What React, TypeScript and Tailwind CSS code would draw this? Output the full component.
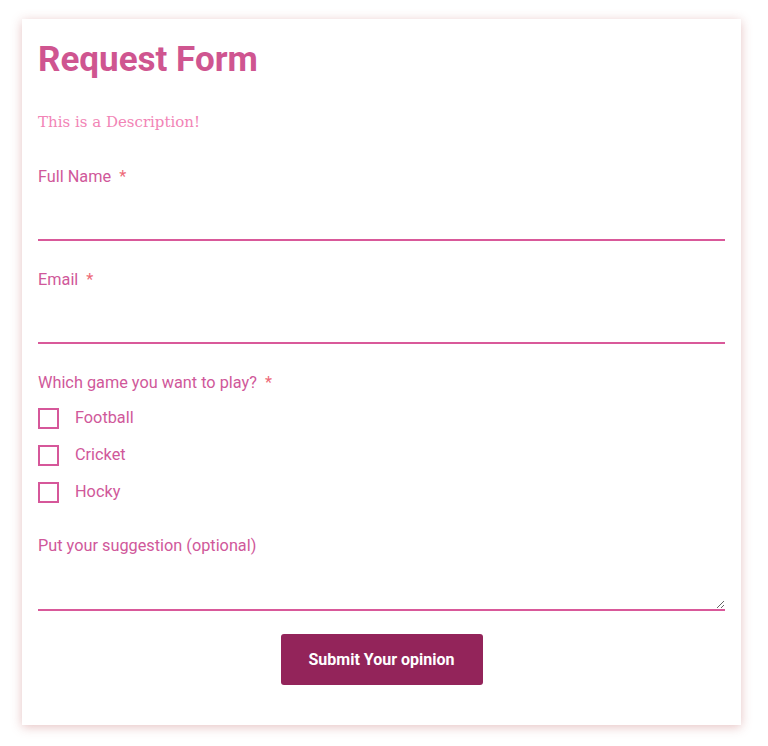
import { useState } from 'react'

const games = ['Football', 'Cricket', 'Hocky']

function Label({ text, required }: { text: string; required?: boolean }) {
  return (
    <label className="block h-6 text-[16.3px] leading-6 text-[#d0589a]">
      {text}
      {required && <span className="ml-2 text-[#ee6a78]">*</span>}
    </label>
  )
}

export default function App() {
  const [checked, setChecked] = useState<string[]>([])

  const toggle = (g: string) =>
    setChecked(c => (c.includes(g) ? c.filter(x => x !== g) : [...c, g]))

  return (
    <div className="min-h-[746px] bg-white pt-[19px] pl-[22px]" style={{ fontFamily: 'Roboto, "Noto Sans", sans-serif' }}>
      <form
        onSubmit={e => e.preventDefault()}
        className="w-[719px] bg-white px-4 pt-[19px] pb-[40px] shadow-[0_2px_10px_rgba(200,120,120,0.45)]"
      >
        <h1 className="h-[43px] text-[35px] leading-[43px] font-bold text-[#cf5590]">Request Form</h1>
        <p
          className="mt-[29px] h-6 text-[15px] leading-6 text-[#f284b6]"
          style={{ fontFamily: '"DejaVu Serif", serif' }}
        >
          This is a Description!
        </p>

        <div className="mt-[31px]">
          <Label text="Full Name" required />
          <input className="block h-[52px] w-full border-b-2 border-[#d9599a] outline-none" />
        </div>

        <div className="mt-[27px]">
          <Label text="Email" required />
          <input className="block h-[52px] w-full border-b-2 border-[#d9599a] outline-none" />
        </div>

        <div className="mt-[27px]">
          <Label text="Which game you want to play?" required />
          <div className="mt-[5px]">
            {games.map(g => (
              <label key={g} className="flex h-[37px] cursor-pointer items-center gap-4">
                <span
                  className={`flex h-[21px] w-[21px] items-center justify-center border-2 border-[#d6579a] ${checked.includes(g) ? 'bg-[#d6579a]' : ''}`}
                >
                  <input type="checkbox" className="hidden" checked={checked.includes(g)} onChange={() => toggle(g)} />
                </span>
                <span className="text-[16.3px] text-[#d0589a]">{g}</span>
              </label>
            ))}
          </div>
        </div>

        <div className="mt-[23px]">
          <Label text="Put your suggestion (optional)" />
          <textarea className="block h-[53px] w-full resize-y border-b-2 border-[#d9599a] outline-none" />
        </div>

        <div className="mt-[23px] flex justify-center">
          <button
            type="submit"
            className="h-[51px] w-[202px] rounded-[3px] bg-[#93245a] text-[16px] font-bold text-white"
          >
            Submit Your opinion
          </button>
        </div>
      </form>
    </div>
  )
}
